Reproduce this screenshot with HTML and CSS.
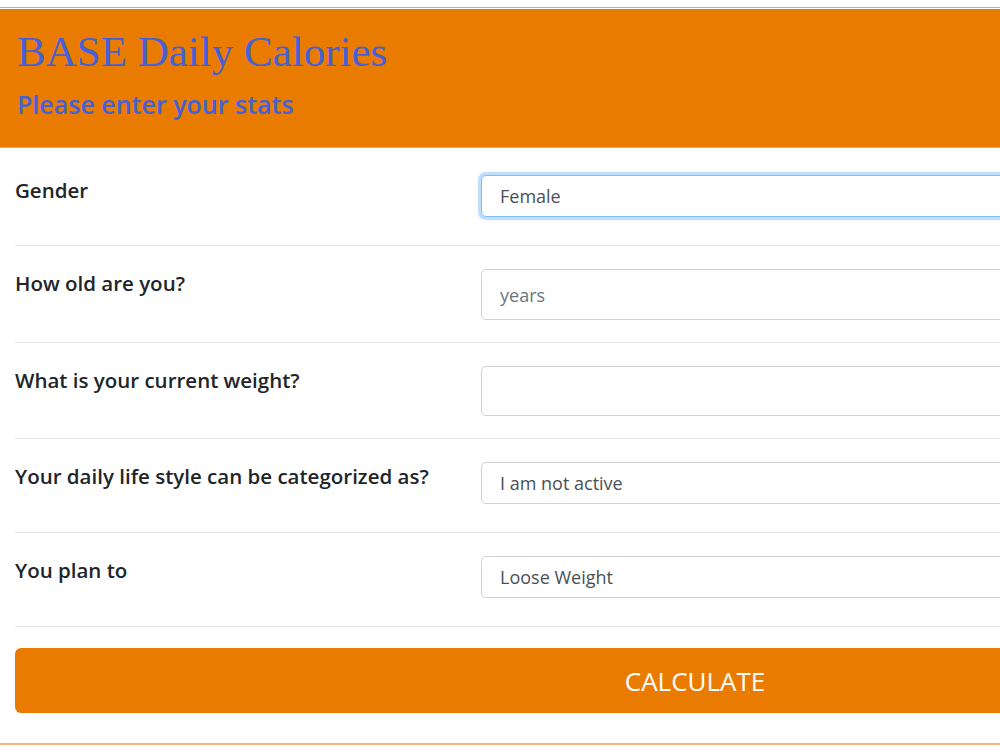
FILE: index.html
```html
<!DOCTYPE html>
<html lang="en">
<head>
    <meta charset="UTF-8">
    <title>BASE Daily Calories</title>
    <link rel="stylesheet" href="styles.css">
</head>
<body>
    <div class="page">
        <div class="header">
            <h1>BASE Daily Calories</h1>
            <h5>Please enter your stats</h5>
        </div>

        <div class="form">
            <div class="row first">
                <label for="gender">Gender</label>
                <div class="field">
                    <select id="gender" class="control focused">
                        <option>Female</option>
                        <option>Male</option>
                    </select>
                </div>
            </div>
            <div class="row">
                <label for="age">How old are you?</label>
                <div class="field">
                    <input type="number" id="age" class="control tall" placeholder="years">
                </div>
            </div>
            <div class="row">
                <label for="weight">What is your current weight?</label>
                <div class="field">
                    <input type="number" id="weight" class="control tall weight">
                </div>
            </div>
            <div class="row">
                <label for="activity">Your daily life style can be categorized as?</label>
                <div class="field">
                    <select id="activity" class="control">
                        <option>I am not active</option>
                        <option>I am somewhat active</option>
                        <option>I am active</option>
                        <option>I am very active</option>
                    </select>
                </div>
            </div>
            <div class="row">
                <label for="plan">You plan to</label>
                <div class="field">
                    <select id="plan" class="control">
                        <option>Loose Weight</option>
                        <option>Maintain Weight</option>
                        <option>Gain Weight</option>
                    </select>
                </div>
            </div>

            <button class="calc">CALCULATE</button>
        </div>
    </div>
</body>
</html>
```

FILE: styles.css
```css
html, body {
    overflow-x: hidden;
}

body {
    margin: 0;
    font-family: 'Open Sans', sans-serif;
    color: #212529;
    background-color: white;
}

.page {
    width: 1390px;
    margin-top: 7px;
    padding-top: 1px;
    padding-bottom: 30px;
    border-top: 1px solid #f2a55a;
    border-bottom: 2px solid #f3b57a;
}

/* ---- header ---- */
.header {
    background-color: #e97c00;
    padding: 17px 17px 28px;
    border-bottom: 1px solid #f0a256;
}

.header h1 {
    margin: 0;
    font-family: 'Liberation Serif', serif;
    font-weight: normal;
    font-size: 43px;
    line-height: 52px;
    color: #4660d8;
}

.header h5 {
    margin: 11px 0 0;
    font-size: 25px;
    font-weight: 600;
    line-height: 30px;
    color: #4660d8;
}

/* ---- form rows ---- */
.form {
    padding: 0 15px;
}

.row {
    display: grid;
    grid-template-columns: 466px 1fr;
    padding: 23px 0 22px;
    min-height: 48px;
    border-bottom: 1px solid #e6e6e6;
}

.row.first {
    padding-top: 27px;
}

.row label {
    font-size: 20.5px;
    font-weight: 600;
    line-height: 28px;
}

.row.first label {
    padding-top: 1px;
}

.control {
    display: block;
    width: 100%;
    box-sizing: border-box;
    height: 42px;
    padding: 0 18px;
    font-family: 'Open Sans', sans-serif;
    font-size: 18px;
    color: #495057;
    background-color: white;
    border: 1px solid #ced4da;
    border-radius: 5px;
    appearance: none;
    -webkit-appearance: none;
}

.control.tall {
    height: 51px;
}

.control.weight {
    height: 50px;
}

.control::placeholder {
    color: #6c757d;
}

.control.focused {
    border-color: #80bdff;
    box-shadow: 0 0 0 3px rgba(0,123,255,0.25);
}

/* ---- button ---- */
.calc {
    display: block;
    width: 100%;
    height: 65px;
    margin-top: 21px;
    background-color: #e97c00;
    color: white;
    border: none;
    border-radius: 6px;
    font-family: 'Open Sans', sans-serif;
    font-size: 26px;
    cursor: pointer;
}
```
